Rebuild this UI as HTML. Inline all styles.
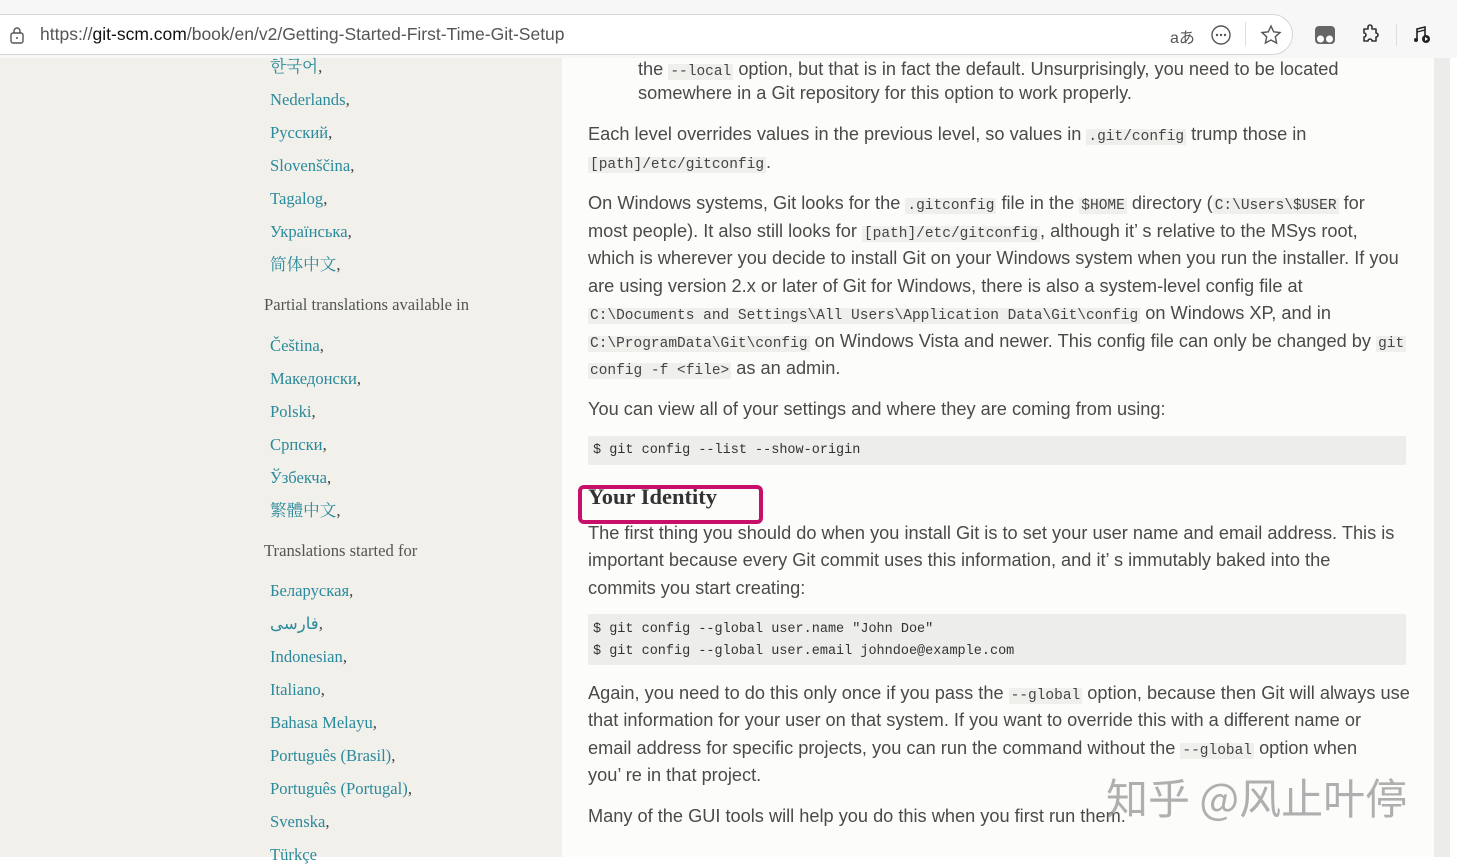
<!DOCTYPE html>
<html><head><meta charset="utf-8"><style>
*{margin:0;padding:0;box-sizing:border-box}
body{width:1457px;height:857px;overflow:hidden;background:#fff;position:relative;font-family:"Liberation Sans","Noto Sans CJK SC",sans-serif}
.top{position:absolute;left:0;top:0;width:1457px;height:58px;background:#f7f7f7}
.url{position:absolute;left:-20px;top:14px;width:1313px;height:41px;border:1px solid #d6d6d6;border-radius:21px;background:#fff}
.urltxt{position:absolute;left:40px;top:24px;font-size:17.5px;color:#555;white-space:nowrap}
.urltxt b{font-weight:normal;color:#111}
.side{position:absolute;left:0;top:58px;width:562px;height:799px;background:#f1f0ea}
.main{position:absolute;left:562px;top:58px;width:872px;height:799px;background:#fcfcfa}
.rs{position:absolute;left:1434px;top:58px;width:16px;height:799px;background:#ececea}
.l{position:absolute;left:270px;font-family:"Liberation Serif","Noto Serif CJK SC",serif;font-size:16.6px;color:#2b8a9c;white-space:nowrap;line-height:20px}
.l i{font-style:normal;color:#444}
.h{position:absolute;left:264px;font-family:"Liberation Serif",serif;font-size:16.6px;color:#555;line-height:20px}
.t{position:absolute;left:588px;font-size:18.2px;color:#4a4a4a;white-space:nowrap;line-height:22px}
code{font-family:"Liberation Mono",monospace;font-size:14.5px;background:#efefec;color:#444;padding:0 2px}
.pre{position:absolute;left:588px;width:818px;background:#ededeb;border-radius:2px}
.pre div{position:absolute;left:5px;font-family:"Liberation Mono",monospace;font-size:13.5px;color:#333;white-space:nowrap;line-height:18px}
</style></head><body>
<div class="top"></div>
<div class="url"></div>
<svg style="position:absolute;left:9px;top:26px" width="16" height="18" viewBox="0 0 16 18"><rect x="2" y="7" width="12" height="10" rx="2" fill="none" stroke="#555" stroke-width="1.4"/><path d="M5 7V5a3 3 0 0 1 6 0v2" fill="none" stroke="#555" stroke-width="1.4"/><circle cx="8" cy="12" r="1" fill="#555"/></svg>
<div class="urltxt">https://<b>git-scm.com</b>/book/en/v2/Getting-Started-First-Time-Git-Setup</div>
<div style="position:absolute;left:1170px;top:24px;font-size:16px;color:#555">aあ</div>
<svg style="position:absolute;left:1210px;top:24px" width="22" height="22"><circle cx="11" cy="11" r="9" fill="none" stroke="#555" stroke-width="1.4"/><circle cx="7" cy="11" r="1.2" fill="#555"/><circle cx="11" cy="11" r="1.2" fill="#555"/><circle cx="15" cy="11" r="1.2" fill="#555"/></svg>
<div style="position:absolute;left:1245px;top:22px;width:1px;height:24px;background:#ddd"></div>
<svg style="position:absolute;left:1260px;top:24px" width="22" height="22"><path d="M11 2l2.7 5.8 6.3.7-4.7 4.3 1.3 6.2L11 16l-5.6 3 1.3-6.2L2 8.5l6.3-.7z" fill="none" stroke="#555" stroke-width="1.4"/></svg>
<svg style="position:absolute;left:1314px;top:25px" width="22" height="20"><rect x="1" y="1" width="20" height="18" rx="4" fill="#666"/><circle cx="6.5" cy="14" r="3.5" fill="#fff"/><circle cx="15.5" cy="14" r="3.5" fill="#fff"/></svg>
<svg style="position:absolute;left:1360px;top:24px" width="22" height="22" viewBox="0 0 22 22"><path d="M8 3a2 2 0 0 1 4 0v2h4v4a2 2 0 0 1 0 4v4h-4a2 2 0 0 0-4 0H4v-4a2 2 0 0 0 0-4V5h4z" fill="none" stroke="#333" stroke-width="1.6" stroke-linejoin="round"/></svg>
<div style="position:absolute;left:1396px;top:24px;width:1px;height:22px;background:#ddd"></div>
<svg style="position:absolute;left:1412px;top:25px" width="20" height="20" viewBox="0 0 20 20"><path d="M5 15V4l8-2v10" fill="none" stroke="#222" stroke-width="1.6"/><circle cx="4" cy="15" r="2" fill="#222"/><path d="M5 7l8-2" stroke="#222" stroke-width="1.4"/><circle cx="14" cy="14" r="4" fill="#222"/><path d="M13 12v4l3-2z" fill="#fff"/></svg>
<div class="side"></div>
<div class="main"></div>
<div class="rs"></div>

<div class="l" style="top:57px">한국어<i>,</i></div>
<div class="l" style="top:90px">Nederlands<i>,</i></div>
<div class="l" style="top:123px">Русский<i>,</i></div>
<div class="l" style="top:156px">Slovenščina<i>,</i></div>
<div class="l" style="top:189px">Tagalog<i>,</i></div>
<div class="l" style="top:222px">Українська<i>,</i></div>
<div class="l" style="top:255px">简体中文<i>,</i></div>
<div class="h" style="top:295px">Partial translations available in</div>
<div class="l" style="top:336px">Čeština<i>,</i></div>
<div class="l" style="top:369px">Македонски<i>,</i></div>
<div class="l" style="top:402px">Polski<i>,</i></div>
<div class="l" style="top:435px">Српски<i>,</i></div>
<div class="l" style="top:468px">Ўзбекча<i>,</i></div>
<div class="l" style="top:501px">繁體中文<i>,</i></div>
<div class="h" style="top:541px">Translations started for</div>
<div class="l" style="top:581px">Беларуская<i>,</i></div>
<div class="l" style="top:614px">فارسی<i>,</i></div>
<div class="l" style="top:647px">Indonesian<i>,</i></div>
<div class="l" style="top:680px">Italiano<i>,</i></div>
<div class="l" style="top:713px">Bahasa Melayu<i>,</i></div>
<div class="l" style="top:746px">Português (Brasil)<i>,</i></div>
<div class="l" style="top:779px">Português (Portugal)<i>,</i></div>
<div class="l" style="top:812px">Svenska<i>,</i></div>
<div class="l" style="top:845px">Türkçe</div>

<div class="t" style="left:638px;top:58px">the <code>--local</code> option, but that is in fact the default. Unsurprisingly, you need to be located</div>
<div class="t" style="left:638px;top:82px">somewhere in a Git repository for this option to work properly.</div>
<div class="t" style="top:123px">Each level overrides values in the previous level, so values in <code>.git/config</code> trump those in</div>
<div class="t" style="top:151px"><code>[path]/etc/gitconfig</code>.</div>
<div class="t" style="top:192px">On Windows systems, Git looks for the <code>.gitconfig</code> file in the <code>$HOME</code> directory (<code>C:\Users\$USER</code> for</div>
<div class="t" style="top:220px">most people). It also still looks for <code>[path]/etc/gitconfig</code>, although it’ s relative to the MSys root,</div>
<div class="t" style="top:247px">which is wherever you decide to install Git on your Windows system when you run the installer. If you</div>
<div class="t" style="top:275px">are using version 2.x or later of Git for Windows, there is also a system-level config file at</div>
<div class="t" style="top:302px"><code>C:\Documents and Settings\All Users\Application Data\Git\config</code> on Windows XP, and in</div>
<div class="t" style="top:330px"><code>C:\ProgramData\Git\config</code> on Windows Vista and newer. This config file can only be changed by <code>git</code></div>
<div class="t" style="top:357px"><code>config -f &lt;file&gt;</code> as an admin.</div>
<div class="t" style="top:398px">You can view all of your settings and where they are coming from using:</div>
<div class="pre" style="top:436px;height:29px"><div style="top:6px">$ git config --list --show-origin</div></div>
<div style="position:absolute;left:588px;top:484px;font-family:'Liberation Serif',serif;font-weight:bold;font-size:22.5px;color:#333">Your Identity</div>
<div style="position:absolute;left:578px;top:485px;width:185px;height:39px;border:4px solid #c8106a;border-radius:6px"></div>
<div class="t" style="top:522px">The first thing you should do when you install Git is to set your user name and email address. This is</div>
<div class="t" style="top:549px">important because every Git commit uses this information, and it’ s immutably baked into the</div>
<div class="t" style="top:577px">commits you start creating:</div>
<div class="pre" style="top:614px;height:51px"><div style="top:7px">$ git config --global user.name "John Doe"</div><div style="top:29px">$ git config --global user.email johndoe@example.com</div></div>
<div class="t" style="top:682px">Again, you need to do this only once if you pass the <code>--global</code> option, because then Git will always use</div>
<div class="t" style="top:709px">that information for your user on that system. If you want to override this with a different name or</div>
<div class="t" style="top:737px">email address for specific projects, you can run the command without the <code>--global</code> option when</div>
<div class="t" style="top:764px">you’ re in that project.</div>
<div class="t" style="top:805px">Many of the GUI tools will help you do this when you first run them.</div>
<div style="position:absolute;left:1106px;top:772px;font-family:'Noto Sans CJK SC',sans-serif;font-size:42px;color:rgba(150,150,150,0.75);white-space:nowrap;line-height:50px">知乎 @风止叶停</div>
</body></html>
